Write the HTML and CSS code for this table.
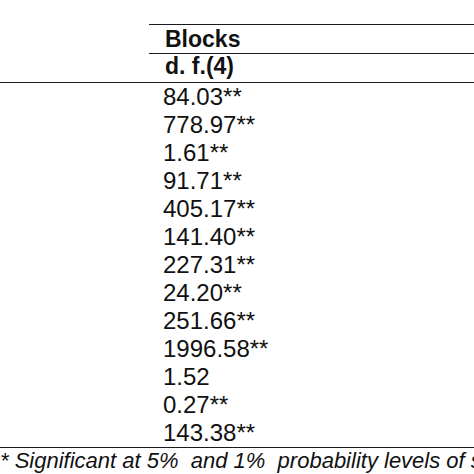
FILE: index.html
```html
<!DOCTYPE html>
<html>
<head>
<meta charset="utf-8">
<link rel="stylesheet" href="styles.css">
</head>
<body>
<div class="sheet">
  <div class="head">
    <div class="stub"></div>
    <div class="headcol">
      <div class="h-title">Blocks</div>
      <div class="h-df">d. f.(4)</div>
    </div>
  </div>
  <div class="rows">
    <div class="row"><span class="lab"></span><span class="val">84.03**</span></div>
    <div class="row"><span class="lab"></span><span class="val">778.97**</span></div>
    <div class="row"><span class="lab"></span><span class="val">1.61**</span></div>
    <div class="row"><span class="lab"></span><span class="val">91.71**</span></div>
    <div class="row"><span class="lab"></span><span class="val">405.17**</span></div>
    <div class="row"><span class="lab"></span><span class="val">141.40**</span></div>
    <div class="row"><span class="lab"></span><span class="val">227.31**</span></div>
    <div class="row"><span class="lab"></span><span class="val">24.20**</span></div>
    <div class="row"><span class="lab"></span><span class="val">251.66**</span></div>
    <div class="row"><span class="lab"></span><span class="val">1996.58**</span></div>
    <div class="row"><span class="lab"></span><span class="val">1.52</span></div>
    <div class="row"><span class="lab"></span><span class="val">0.27**</span></div>
    <div class="row"><span class="lab"></span><span class="val">143.38**</span></div>
  </div>
  <div class="foot">* Significant at 5%&nbsp; and 1%&nbsp; probability levels of significance</div>
</div>
</body>
</html>
```

FILE: styles.css
```css
html, body {
  margin: 0;
  padding: 0;
  background: #fff;
}
body {
  width: 474px;
  height: 474px;
  overflow: hidden;
  font-family: "Liberation Sans", Arial, sans-serif;
  color: #111;
}
.sheet {
  padding-top: 24px;
  width: 474px;
}
.head {
  display: grid;
  grid-template-columns: 149px 1fr;
}
.headcol {
  border-top: 1px solid #1a1a1a;
}
.h-title {
  font-weight: bold;
  font-size: 23px;
  line-height: 28px;
  padding-left: 16px;
  border-bottom: 1px solid #1a1a1a;
}
.h-df {
  font-weight: bold;
  font-size: 23px;
  line-height: 24px;
  padding-bottom: 4px;
  padding-left: 16px;
}
.rows {
  border-top: 1px solid #1a1a1a;
  border-bottom: 1px solid #1a1a1a;
}
.row {
  display: grid;
  grid-template-columns: 163px 1fr;
  height: 28px;
  font-size: 24px;
  line-height: 28px;
}
.foot {
  font-style: italic;
  font-size: 22px;
  line-height: 26px;
  white-space: nowrap;
  overflow: hidden;
}
```
